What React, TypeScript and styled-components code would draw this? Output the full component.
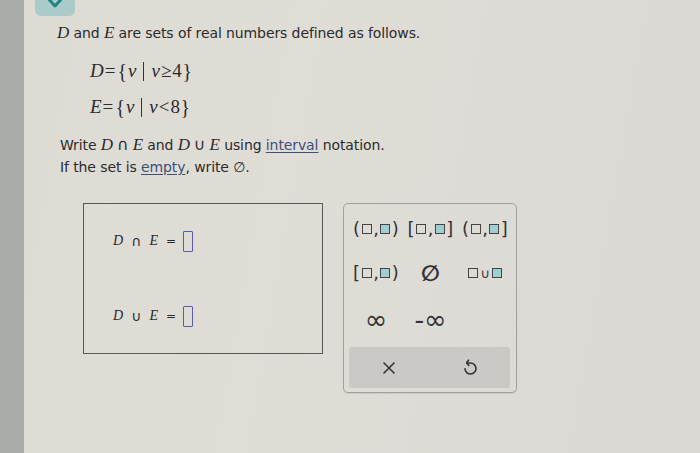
import React from "react";
import styled, { createGlobalStyle } from "styled-components";

const Global = createGlobalStyle`
  html, body { margin: 0; padding: 0; background: #dddad4; }
  body { width: 700px; height: 453px; overflow: hidden; font-family: "DejaVu Sans", Verdana, sans-serif; color: #2b2b2b; }
`;

const Page = styled.div`
  display: flex;
  width: 700px;
  height: 453px;
  background: linear-gradient(100deg, #dedbd5 0%, #e0ddd7 40%, #dbd9d4 100%);
`;

const Strip = styled.div`
  width: 24px;
  flex: none;
  background: #a9adaa;
`;

const Main = styled.div`
  flex: 1;
  display: flex;
  flex-direction: column;
  padding-left: 33px;
`;

const Tab = styled.div`
  width: 40px;
  height: 16px;
  margin-left: -22px;
  background: #aacbc9;
  border-radius: 0 0 6px 6px;
  display: flex;
  justify-content: center;
  align-items: flex-start;
`;

const Para = styled.div<{ $mt?: number; $ml?: number }>`
  font-size: 14px;
  line-height: 22px;
  margin-top: ${(p) => p.$mt ?? 0}px;
  margin-left: ${(p) => p.$ml ?? 0}px;
  letter-spacing: -0.1px;
  white-space: nowrap;
`;

const M = styled.span`
  font-family: "Liberation Serif", "Times New Roman", serif;
  font-style: italic;
  font-size: 17px;
`;

const Op = styled.span`
  font-size: 16px;
  margin: 0 4px;
`;

const MathLine = styled.div<{ $mt: number }>`
  font-family: "Liberation Serif", "Times New Roman", serif;
  font-size: 19px;
  line-height: 22px;
  margin-top: ${(p) => p.$mt}px;
  margin-left: 33px;
  white-space: nowrap;
  display: flex;
  align-items: center;
`;

const Eq = styled.span`
  margin: 0 2px 0 1px;
`;

const Brace = styled.span`
  font-size: 22px;
  transform: scaleX(0.9);
  display: inline-block;
`;

const Rel = styled.span`
  margin: 0 1px;
`;

const Bar = styled.span`
  display: inline-block;
  width: 1px;
  height: 19px;
  background: #333;
  margin: 0 7px;
`;

const Link = styled.span`
  color: #3d4f7a;
  text-decoration: underline;
  text-underline-offset: 2px;
`;

const Work = styled.div`
  display: flex;
  align-items: flex-start;
  margin-top: 25px;
  margin-left: 26px;
  gap: 20px;
`;

const AnswerBox = styled.div`
  width: 240px;
  height: 151px;
  box-sizing: border-box;
  border: 1px solid #585858;
  display: flex;
  flex-direction: column;
  padding-left: 29px;
`;

const AnsRow = styled.div<{ $mt: number }>`
  display: flex;
  align-items: center;
  margin-top: ${(p) => p.$mt}px;
  font-size: 12px;
  gap: 8px;
  height: 24px;
`;

const AM = styled.span`
  font-family: "Liberation Serif", serif;
  font-style: italic;
  font-size: 14px;
`;

const SetOp = styled.span`
  font-size: 14px;
`;

const InputSlot = styled.span`
  display: inline-block;
  width: 8px;
  height: 19px;
  border: 1.5px solid #5a5cb0;
  border-radius: 1px;
  margin-left: -1px;
`;

const Keypad = styled.div`
  box-sizing: border-box;
  width: 174px;
  height: 190px;
  border: 1px solid #a0a09c;
  border-radius: 5px;
  padding: 3px 6px 0 5px;
  display: flex;
  flex-direction: column;
  box-shadow: 0 1px 1px rgba(0, 0, 0, 0.08);
`;

const KeyGrid = styled.div`
  display: grid;
  grid-template-columns: 54px 55px 54px;
  grid-template-rows: 44px 44px 48px;
`;

const Key = styled.div<{ $size?: number; $bold?: boolean }>`
  display: flex;
  align-items: center;
  justify-content: center;
  font-size: ${(p) => p.$size ?? 16}px;
  font-weight: ${(p) => (p.$bold ? 700 : 400)};
  color: #333;
  font-family: "DejaVu Sans", sans-serif;
`;

const Box = styled.span<{ $fill?: boolean }>`
  display: inline-block;
  width: 8px;
  height: 8px;
  border: 1.5px solid #444;
  background: ${(p) => (p.$fill ? "#9fcfd2" : "transparent")};
  margin: 0 1.5px;
`;

const Br = styled.span`
  font-size: 18px;
  line-height: 1;
`;

const Cup = styled.span`
  font-size: 13px;
  margin: 0 1px;
`;

const ActionBar = styled.div`
  margin-top: 4px;
  height: 41px;
  background: #cac9c5;
  border-radius: 3px;
  display: grid;
  grid-template-columns: 1fr 1fr;
  align-items: center;
  justify-items: center;
`;

const Pair = ({ l, r }: { l: string; r: string }) => (
  <Key>
    <Br>{l}</Br>
    <Box />
    <Br>,</Br>
    <Box $fill />
    <Br>{r}</Br>
  </Key>
);

export default function App() {
  return (
    <>
      <Global />
      <Page>
        <Strip />
        <Main>
          <Tab>
            <svg width="14" height="9" viewBox="0 0 14 9">
              <path d="M1.5 0 L7 6 L12.5 0" fill="none" stroke="#1f8686" strokeWidth="3" strokeLinecap="round" strokeLinejoin="round" />
            </svg>
          </Tab>
          <Para $mt={6}>
            <M>D</M> and <M>E</M> are sets of real numbers defined as follows.
          </Para>
          <MathLine $mt={16}>
            <i>D</i><Eq>=</Eq><Brace>{"{"}</Brace><i>v</i><Bar /><i>v</i><Rel>≥</Rel>4<Brace>{"}"}</Brace>
          </MathLine>
          <MathLine $mt={14}>
            <i>E</i><Eq>=</Eq><Brace>{"{"}</Brace><i>v</i><Bar /><i>v</i><Rel>&lt;</Rel>8<Brace>{"}"}</Brace>
          </MathLine>
          <Para $mt={16} $ml={3}>
            Write <M>D</M>
            <Op>∩</Op>
            <M>E</M> and <M>D</M>
            <Op>∪</Op>
            <M>E</M> using <Link>interval</Link> notation.
          </Para>
          <Para $ml={3}>
            If the set is <Link>empty</Link>, write ∅.
          </Para>
          <Work>
            <AnswerBox>
              <AnsRow $mt={25}>
                <AM>D</AM>
                <SetOp>∩</SetOp>
                <AM>E</AM>
                <span>=</span>
                <InputSlot />
              </AnsRow>
              <AnsRow $mt={51}>
                <AM>D</AM>
                <SetOp>∪</SetOp>
                <AM>E</AM>
                <span>=</span>
                <InputSlot />
              </AnsRow>
            </AnswerBox>
            <Keypad>
              <KeyGrid>
                <Pair l="(" r=")" />
                <Pair l="[" r="]" />
                <Pair l="(" r="]" />
                <Pair l="[" r=")" />
                <Key $size={22} $bold>∅</Key>
                <Key>
                  <Box />
                  <Cup>∪</Cup>
                  <Box $fill />
                </Key>
                <Key $size={27}>∞</Key>
                <Key $size={27}>-∞</Key>
                <Key />
              </KeyGrid>
              <ActionBar>
                <svg width="14" height="14" viewBox="0 0 14 14">
                  <path d="M2 2 L12 12 M12 2 L2 12" stroke="#333" strokeWidth="1.6" strokeLinecap="round" />
                </svg>
                <svg width="16" height="18" viewBox="0 0 16 18">
                  <path d="M5 4 L8.5 4 A5.5 5.5 0 1 1 3 9.8" fill="none" stroke="#333" strokeWidth="1.6" strokeLinecap="round" />
                  <path d="M6.5 1.2 L4.6 4 L6.8 6.5" fill="none" stroke="#333" strokeWidth="1.6" strokeLinecap="round" strokeLinejoin="round" />
                </svg>
              </ActionBar>
            </Keypad>
          </Work>
        </Main>
      </Page>
    </>
  );
}
